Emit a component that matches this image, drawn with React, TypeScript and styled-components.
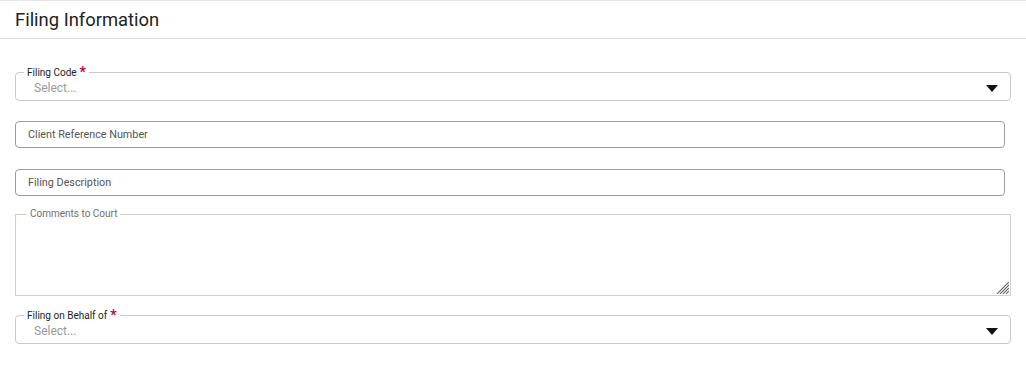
import React from "react";
import styled, { createGlobalStyle } from "styled-components";

const GlobalStyle = createGlobalStyle`
  html, body {
    margin: 0;
    padding: 0;
    background: #ffffff;
    font-family: Roboto, "Liberation Sans", Arial, sans-serif;
  }
`;

const Caret = () => (
  <svg width="12" height="7" viewBox="0 0 12 7">
    <path d="M0 0 L12 0 L6 7 Z" fill="#111" />
  </svg>
);

const App = () => {
  return (
    <>
      <GlobalStyle />
      <Card>
        <Header>
          <Title>Filing Information</Title>
        </Header>
        <Body>
          <SelectField $top={27}>
            <Legend>
              Filing Code<Star>*</Star>
            </Legend>
            <SelectRow>
              <Placeholder>Select...</Placeholder>
              <Caret />
            </SelectRow>
          </SelectField>

          <TextBox $top={20}>Client Reference Number</TextBox>
          <TextBox $top={21}>Filing Description</TextBox>

          <AreaWrap>
            <AreaField>
              <AreaLegend>Comments to Court</AreaLegend>
            </AreaField>
            <Grip>
              <svg width="13" height="13" viewBox="0 0 13 13">
                <path
                  d="M13 1 L1 13 M13 4 L4 13 M13 7 L7 13 M13 10 L10 13"
                  stroke="#6e6e6e"
                  strokeWidth="1.1"
                />
              </svg>
            </Grip>
          </AreaWrap>

          <SelectField $top={13}>
            <Legend>
              Filing on Behalf of<Star>*</Star>
            </Legend>
            <SelectRow>
              <Placeholder>Select...</Placeholder>
              <Caret />
            </SelectRow>
          </SelectField>
        </Body>
      </Card>
    </>
  );
};

export default App;

const Card = styled.div`
  width: 100%;
  height: 377px;
  border-top: 1px solid #e6e6e6;
  box-sizing: border-box;
  background: #ffffff;
`;

const Header = styled.div`
  height: 37px;
  display: flex;
  align-items: center;
  padding-left: 15px;
  border-bottom: 1px solid #dcdcdc;
`;

const Title = styled.div`
  font-size: 18.4px;
  color: #222222;
  font-weight: 400;
`;

const Body = styled.div`
  display: flex;
  flex-direction: column;
  padding: 0 15px 0 15px;
`;

const SelectField = styled.fieldset<{ $top: number }>`
  margin: ${(p) => p.$top}px 0 0 0;
  padding: 0 12px 0 18px;
  height: 35px;
  box-sizing: border-box;
  border: 1px solid #c9c9c9;
  border-radius: 4px;
  min-width: 0;
`;

const Legend = styled.legend`
  padding: 0 3px 0 3px;
  margin-left: -10px;
  font-size: 10px;
  line-height: 12px;
  color: #222222;
`;

const Star = styled.span`
  color: #c0004b;
  font-size: 14px;
  margin-left: 3px;
  font-weight: 700;
  vertical-align: -1px;
`;

const SelectRow = styled.div`
  display: flex;
  align-items: center;
  justify-content: space-between;
  height: 20px;
  margin-top: -1px;
`;

const Placeholder = styled.div`
  font-size: 12px;
  color: #9a9a9a;
`;

const TextBox = styled.div<{ $top: number }>`
  margin-top: ${(p) => p.$top}px;
  margin-right: 6px;
  height: 27px;
  box-sizing: border-box;
  border: 1px solid #9c9c9c;
  border-radius: 4px;
  display: flex;
  align-items: center;
  padding-left: 12px;
  font-size: 10.8px;
  color: #555555;
`;

const AreaWrap = styled.div`
  position: relative;
  margin-top: 12px;
`;

const AreaField = styled.fieldset`
  margin: 0;
  padding: 0;
  height: 88px;
  box-sizing: border-box;
  border: 1px solid #cfcfcf;
  min-width: 0;
`;

const AreaLegend = styled.legend`
  margin-left: 11px;
  padding: 0 3px;
  font-size: 10px;
  line-height: 12px;
  color: #6f6f6f;
`;

const Grip = styled.div`
  position: absolute;
  right: 2px;
  bottom: 2px;
  width: 13px;
  height: 13px;
  display: flex;
`;
